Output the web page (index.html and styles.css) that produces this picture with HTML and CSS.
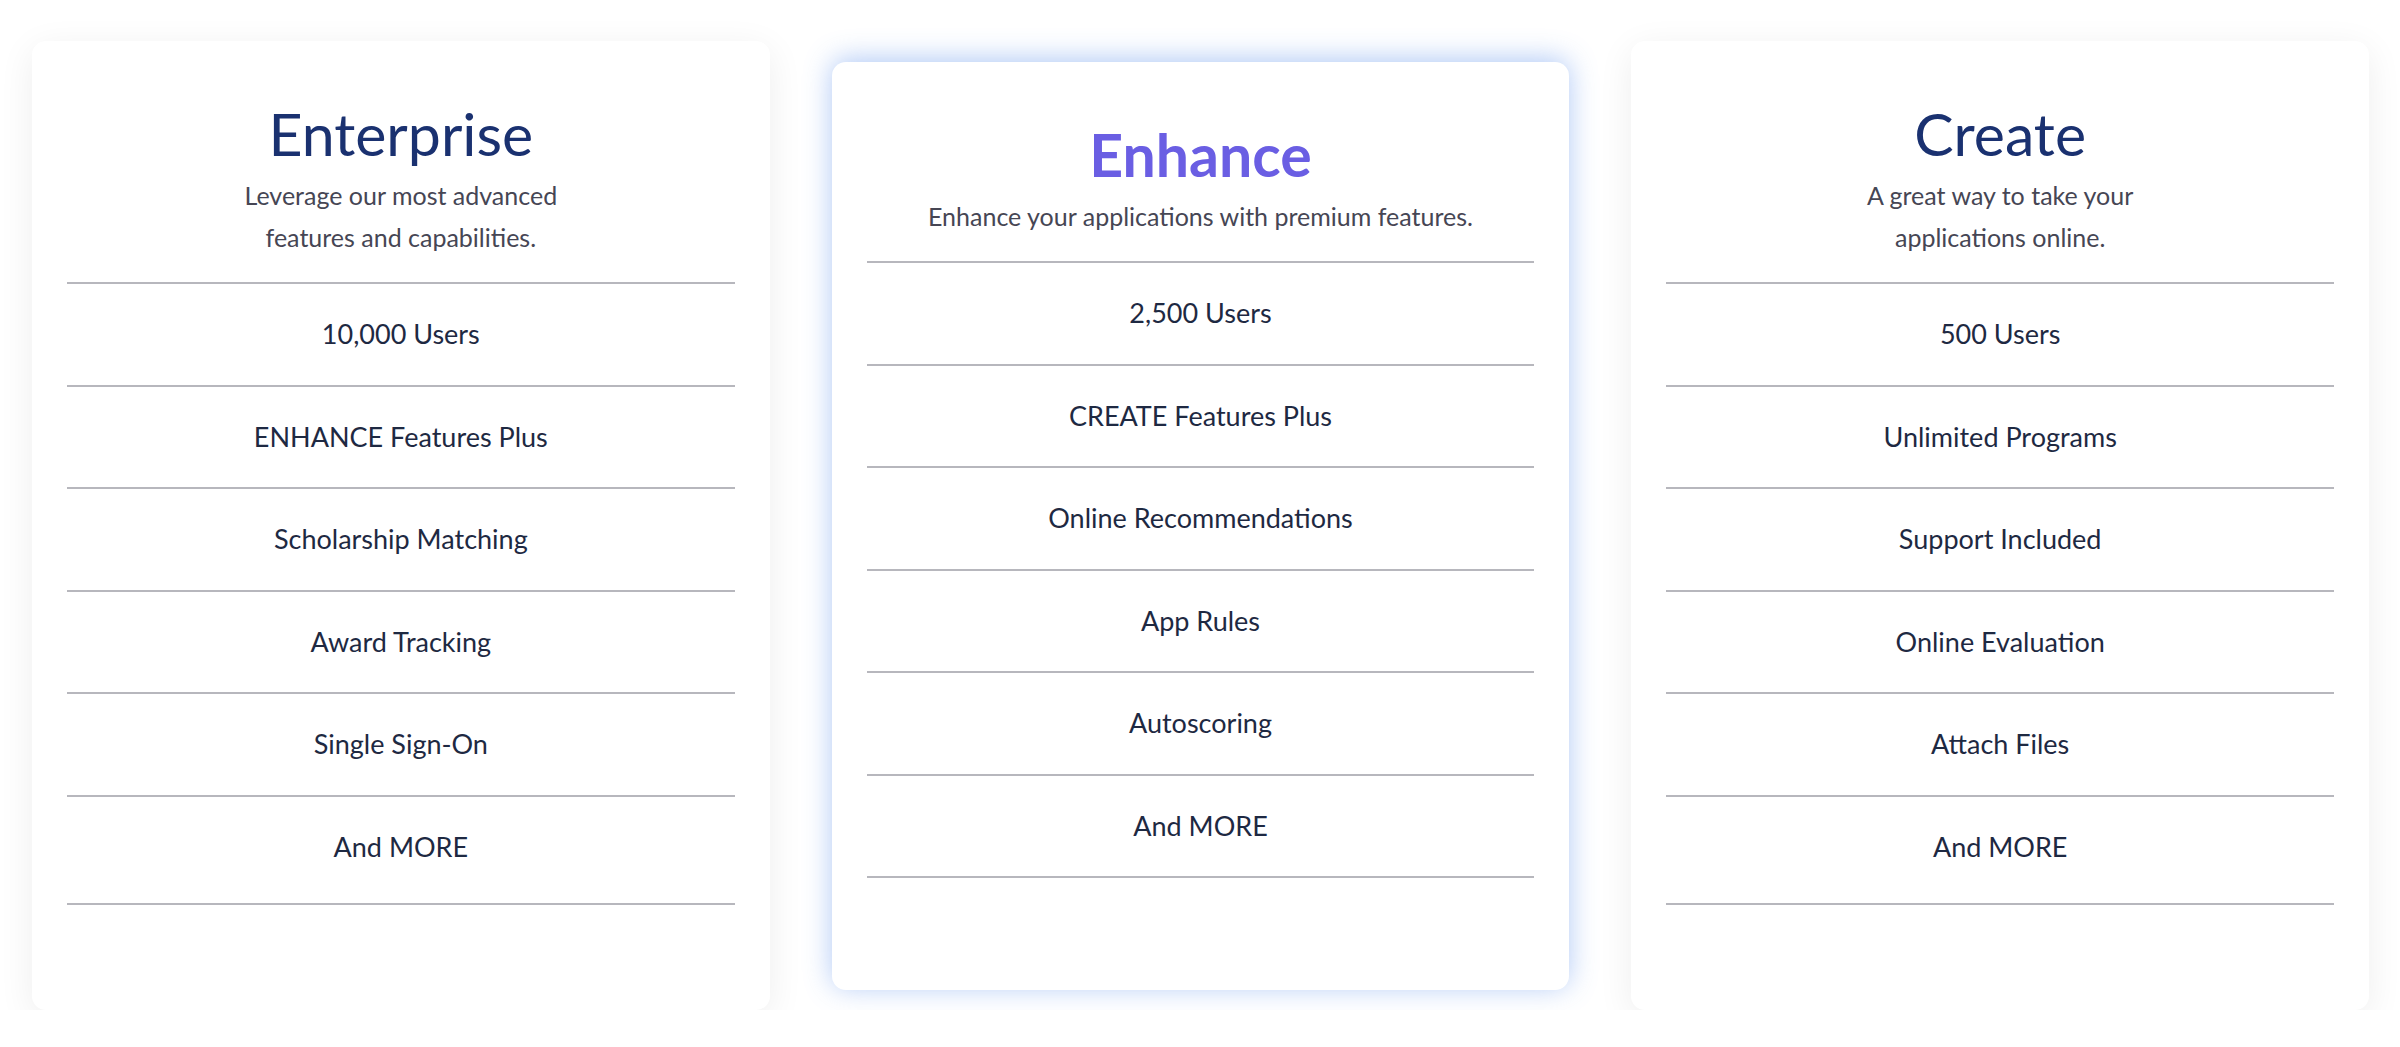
FILE: index.html
```html
<!DOCTYPE html>
<html lang="en">
<head>
<meta charset="utf-8">
<title>Plans</title>
<link rel="stylesheet" href="styles.css">
</head>
<body>
<main class="plans">
  <section class="card">
    <h2 class="card__title">Enterprise</h2>
    <p class="card__sub">Leverage our most advanced<br>features and capabilities.</p>
    <ul class="features features--tall">
      <li>10,000 Users</li>
      <li>ENHANCE Features Plus</li>
      <li>Scholarship Matching</li>
      <li>Award Tracking</li>
      <li>Single Sign-On</li>
      <li>And MORE</li>
    </ul>
  </section>
  <section class="card card--featured">
    <h2 class="card__title card__title--featured">Enhance</h2>
    <p class="card__sub">Enhance your applications with premium features.</p>
    <ul class="features">
      <li>2,500 Users</li>
      <li>CREATE Features Plus</li>
      <li>Online Recommendations</li>
      <li>App Rules</li>
      <li>Autoscoring</li>
      <li>And MORE</li>
    </ul>
  </section>
  <section class="card">
    <h2 class="card__title">Create</h2>
    <p class="card__sub">A great way to take your<br>applications online.</p>
    <ul class="features features--tall">
      <li>500 Users</li>
      <li>Unlimited Programs</li>
      <li>Support Included</li>
      <li>Online Evaluation</li>
      <li>Attach Files</li>
      <li>And MORE</li>
    </ul>
  </section>
</main>
</body>
</html>
```
FILE: styles.css
```css
* { box-sizing: border-box; }
html, body {
  margin: 0;
  padding: 0;
  background: #ffffff;
  font-family: Lato, "Open Sans", "Liberation Sans", sans-serif;
}
.plans {
  display: grid;
  grid-template-columns: repeat(3, 1fr);
  column-gap: 62px;
  padding: 41px 31px 0 32px;
  align-items: stretch;
}
.card {
  background: #ffffff;
  border-radius: 14px;
  box-shadow: 0 8px 36px rgba(0, 0, 0, 0.07);
  padding: 58px 35px 105px;
  text-align: center;
}
.card--featured {
  margin: 21px 0 20px;
  box-shadow: 0 -3px 28px rgba(80, 135, 235, 0.45);
}
.card__title {
  margin: 0;
  font-size: 59px;
  line-height: 70px;
  font-weight: 400;
  color: #1a3170;
}
.card__title--featured {
  font-weight: 700;
  color: #6a5ee3;
}
.card__sub {
  margin: 5px 0 0;
  font-size: 25px;
  line-height: 42px;
  color: #464654;
}
.features {
  list-style: none;
  margin: 24px 0 0;
  padding: 0;
  border-bottom: 2px solid #b7b7bd;
}
.features li {
  border-top: 2px solid #b7b7bd;
  padding: 34px 0 34px;
  font-size: 27px;
  line-height: 32.5px;
  color: #1e2942;
}
.features--tall li:last-child {
  padding-bottom: 40px;
}
```
